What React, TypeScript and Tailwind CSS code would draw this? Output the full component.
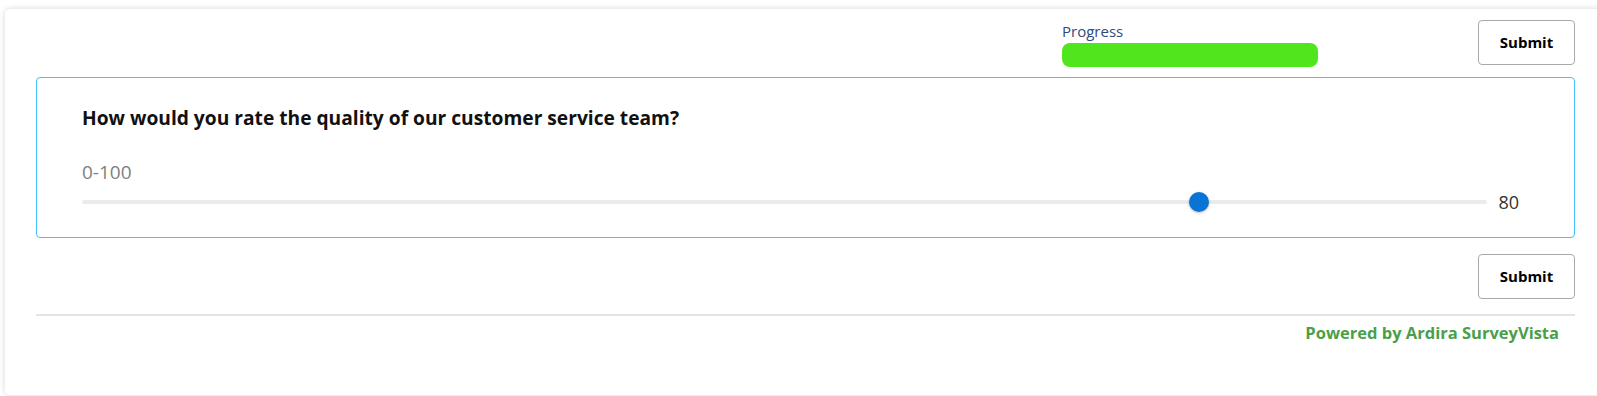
import React from "react";

export default function App() {
  const font = { fontFamily: '"Open Sans", "Noto Sans", sans-serif' };
  return (
    <div className="w-[1597px] h-[396px] overflow-hidden bg-white" style={font}>
      <div className="ml-[5px] mt-[9px] w-[1601px] h-[386px] rounded-[5px] bg-white shadow-[0_0_6px_rgba(0,0,0,0.16)] pl-[31px] pr-[31px] pt-[11px]">
        <div className="flex items-start justify-end">
          <div className="mr-[160px] mt-[3px] flex flex-col">
            <span className="text-[15px] leading-[16px] text-[#2e4a7d]">Progress</span>
            <div className="mt-[4px] h-[24px] w-[256px] rounded-[8px] bg-[#4fe61e]" />
          </div>
          <button className="h-[45px] w-[97px] rounded-[4px] border border-[#a9a9a9] bg-white text-[15px] font-bold text-black">
            Submit
          </button>
        </div>
        <div className="mt-[10px] h-[161px] rounded-[4px] border border-[#45c0ff] pl-[45px] pr-[55px] pt-[28px]">
          <div className="text-[19.2px] font-bold leading-[24px] text-[#111]">
            How would you rate the quality of our customer service team?
          </div>
          <div className="mt-[30px] text-[19px] leading-[24px] text-[#808080]">0-100</div>
          <div className="mt-[6px] flex items-center">
            <div className="relative h-[4px] flex-1 rounded-full bg-[#ebebeb]">
              <div className="absolute top-1/2 left-[79.5%] h-[20px] w-[20px] -translate-x-1/2 -translate-y-1/2 rounded-full bg-[#0a73d6] shadow-[0_1px_3px_rgba(0,0,0,0.25)]" />
            </div>
            <span className="ml-[11px] text-[18px] leading-[24px] text-[#333]">80</span>
          </div>
        </div>
        <div className="mt-[16px] flex justify-end">
          <button className="h-[45px] w-[97px] rounded-[4px] border border-[#a9a9a9] bg-white text-[15px] font-bold text-black">
            Submit
          </button>
        </div>
        <div className="mt-[15px] h-[2px] bg-[#e3e3e3]" />
        <div className="mt-[5px] flex justify-end pr-[16px]">
          <span className="text-[16.5px] font-bold leading-[24px] text-[#4a9f48]">Powered by Ardira SurveyVista</span>
        </div>
      </div>
    </div>
  );
}
